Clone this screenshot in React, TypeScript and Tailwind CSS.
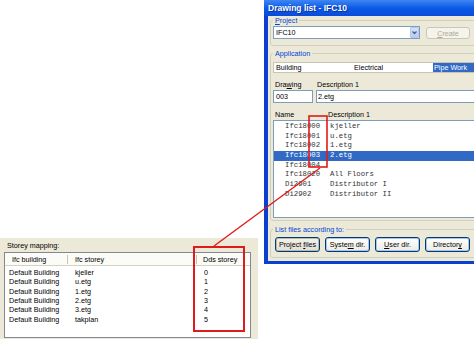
import React from "react";

const listRows = [
  { n: "Ifc18000", d: "kjeller" },
  { n: "Ifc18001", d: "u.etg" },
  { n: "Ifc18002", d: "1.etg" },
  { n: "Ifc18003", d: "2.etg", sel: true },
  { n: "Ifc18004", d: "" },
  { n: "Ifc18020", d: "All Floors" },
  { n: "Di2901", d: "Distributor I" },
  { n: "Di2902", d: "Distributor II" },
];

const storeys = [
  ["Default Building", "kjeller", "0"],
  ["Default Building", "u.etg", "1"],
  ["Default Building", "1.etg", "2"],
  ["Default Building", "2.etg", "3"],
  ["Default Building", "3.etg", "4"],
  ["Default Building", "takplan", "5"],
];

function XpButton({ children, pressed }: { children: React.ReactNode; pressed?: boolean }) {
  return (
    <div
      className={
        "w-[45px] h-[15px] flex items-center justify-center rounded-[3px] border border-[#003c74] " +
        (pressed
          ? "bg-linear-to-b from-[#f3f2ec] to-[#e2dfd3] shadow-[inset_0_0_0_1px_#b9b7aa]"
          : "bg-linear-to-b from-[#ffffff] to-[#ecebe4] shadow-[inset_0_0_0_1px_#a9c3ef]")
      }
    >
      {children}
    </div>
  );
}

export default function App() {
  return (
    <div className="relative w-[474px] h-[339px] bg-white overflow-hidden [font-family:'Liberation_Sans',Arial,sans-serif] text-[7.2px] leading-[9px] text-black">
      {/* Drawing list window */}
      <div className="absolute left-[264px] top-0 w-[240px] h-[264px] flex flex-col bg-[#0a3fd0]">
        <div className="h-[16px] shrink-0 flex items-center pl-[4px] bg-linear-to-b from-[#3d86f4] via-[#0a5ae6] to-[#0a4bd8]">
          <span className="text-white font-bold text-[8.5px] leading-[10px] [text-shadow:1px_1px_0_#0a2f9a]">
            Drawing list - IFC10
          </span>
        </div>
        <div className="ml-[4px] h-[245px] bg-[#ece9d8] flex flex-col px-[2px]">
          {/* Project */}
          <fieldset className="border border-[#d0d0bf] rounded-[3px] pl-[2px] pb-[6px]">
            <legend className="px-[2px] text-[#0046d5] leading-[9px]">
              <span className="underline">P</span>roject
            </legend>
            <div className="mt-[1px] flex items-start">
              <div className="w-[147px] h-[13px] border border-[#7f9db9] bg-white flex items-center">
                <span className="pl-[2px] flex-1">IFC10</span>
                <div className="w-[9px] h-[11px] mr-0 rounded-[1px] bg-linear-to-b from-[#d6e2fc] to-[#b6cbf7] border border-[#b5c8f2] flex items-center justify-center">
                  <svg width="7" height="7" viewBox="0 0 7 7">
                    <path d="M1.5 2.5 L3.5 4.5 L5.5 2.5" fill="none" stroke="#4d6185" strokeWidth="1.3" />
                  </svg>
                </div>
              </div>
              <div className="ml-[6px] mt-[1px] w-[44px] h-[12px] rounded-[3px] border border-[#c9c7ba] bg-[#f5f4ea] flex items-center justify-center text-[#aca899]">
                <span>
                  <span className="underline">C</span>reate
                </span>
              </div>
            </div>
          </fieldset>

          {/* Application */}
          <fieldset className="mt-[3px] border border-[#d0d0bf] rounded-[3px] pl-[2px] pb-[2px]">
            <legend className="px-[2px] text-[#0046d5] leading-[9px]">Application</legend>
            <div className="mt-[4px] h-[11px] bg-white border border-[#c7c5b2] flex items-center">
              <span className="w-[80px] pl-[2px]">Building</span>
              <span className="w-[79px]">Electrical</span>
              <span className="flex-1 h-full bg-[#316ac5] text-white pl-[1px] flex items-center">Pipe Work</span>
            </div>
            <div className="mt-[7px] flex">
              <span className="ml-[2px] w-[42px]">
                Dra<span className="underline">w</span>ing
              </span>
              <span>Description 1</span>
            </div>
            <div className="mt-[1px] flex gap-[3px]">
              <div className="w-[40px] h-[13px] border border-[#7f9db9] bg-white flex items-center pl-[2px]">003</div>
              <div className="flex-1 h-[13px] border border-[#7f9db9] bg-white flex items-center pl-[1px]">2.etg</div>
            </div>
            <div className="mt-[7px] flex">
              <span className="ml-[2px] w-[53px]">Name</span>
              <span>Description 1</span>
            </div>
            <div className="mt-[1px] h-[98px] border border-[#7f9db9] bg-white pt-[1px] [font-family:'Liberation_Mono','Courier_New',monospace] text-[7.3px] text-[#333333]">
              {listRows.map((r) => (
                <div
                  key={r.n}
                  className={"h-[9.7px] flex items-center leading-[9.7px] " + (r.sel ? "bg-[#316ac5] text-white" : "")}
                >
                  <span className="pl-[11px] w-[56px] whitespace-pre">{r.n}</span>
                  <span className="whitespace-pre">{r.d}</span>
                </div>
              ))}
            </div>
          </fieldset>

          {/* List files according to */}
          <fieldset className="mt-[4px] border border-[#d0d0bf] rounded-[3px] pl-[2px] pb-[5px]">
            <legend className="px-[2px] text-[#0046d5] leading-[9px]">List files according to:</legend>
            <div className="mt-[3px] ml-[2px] flex gap-[5px]">
              <XpButton pressed>
                <span>
                  Project <span className="underline">f</span>iles
                </span>
              </XpButton>
              <XpButton>
                <span>
                  Syste<span className="underline">m</span> dir.
                </span>
              </XpButton>
              <XpButton>
                <span>
                  <span className="underline">U</span>ser dir.
                </span>
              </XpButton>
              <XpButton>
                <span>
                  Director<span className="underline">y</span>
                </span>
              </XpButton>
            </div>
          </fieldset>
        </div>
      </div>

      {/* Storey mapping panel */}
      <div className="absolute left-0 top-[238px] w-[258px] h-[101px] bg-[#ece9d8] flex flex-col">
        <div className="pl-[7px] pt-[2.5px] leading-[9px]">Storey mapping:</div>
        <div className="mt-[2.5px] ml-[4px] w-[247px] h-[86px] border border-[#828790] bg-white flex flex-col">
          <div className="h-[13px] flex items-center bg-[#fbfbf8] border-b border-[#d5d2c4]">
            <span className="w-[63px] pl-[7px] h-[9px] border-r border-[#c7c5b2]">Ifc building</span>
            <span className="w-[129px] pl-[7px] h-[9px] border-r border-[#c7c5b2]">Ifc storey</span>
            <span className="pl-[6px]">Dds storey</span>
          </div>
          <div className="pt-[2px]">
            {storeys.map((s, i) => (
              <div key={i} className="h-[9.35px] flex items-center leading-[9.35px]">
                <span className="w-[63px] pl-[4px] whitespace-nowrap">{s[0]}</span>
                <span className="w-[129px] pl-[7px]">{s[1]}</span>
                <span className="pl-[7px]">{s[2]}</span>
              </div>
            ))}
          </div>
        </div>
      </div>

      {/* Red annotations */}
      <svg className="absolute inset-0 pointer-events-none" width="474" height="339" viewBox="0 0 474 339">
        <rect x="194" y="247" width="50" height="84" fill="none" stroke="#e01b1b" strokeWidth="2" />
        <rect x="309" y="116" width="18" height="51" fill="none" stroke="#e01b1b" strokeWidth="1.6" />
        <line x1="214" y1="246" x2="320" y2="168" stroke="#e01b1b" strokeWidth="1.4" />
      </svg>
    </div>
  );
}
